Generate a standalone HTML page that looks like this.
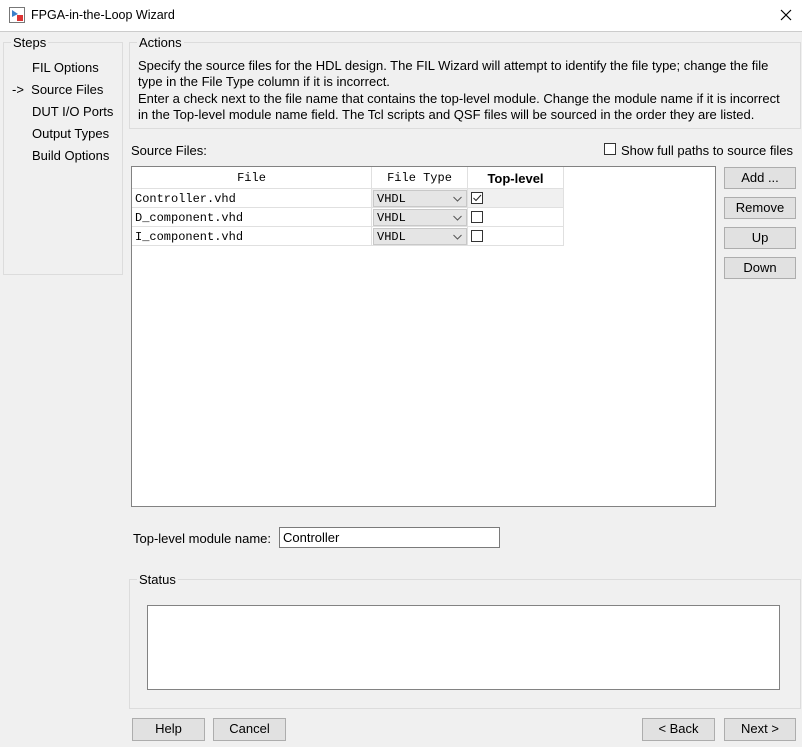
<html><head><style>
body{margin:0;width:802px;height:747px;background:#f0f0f0;font-family:"Liberation Sans",sans-serif;font-size:13px;color:#000;position:relative;overflow:hidden}
.a{position:absolute}
.grp{position:absolute;border:1px solid #dcdcdc}
.lg{position:absolute;background:#f0f0f0;padding:0 2px;top:-8px;font-size:13px}
.btn{position:absolute;background:#e1e1e1;border:1px solid #adadad;box-sizing:border-box;text-align:center;line-height:20px;font-size:13px}
.mono{font-family:"Liberation Mono",monospace;font-size:12px}
.cell{position:absolute;box-sizing:border-box;border-right:1px solid #e0e0e0;border-bottom:1px solid #e0e0e0;height:19px;line-height:20px}
.dd{position:absolute;background:#e5e5e5;border:1px solid #c8c8c8;box-sizing:border-box;height:17px;line-height:16px;padding-left:3px}
.dd svg{position:absolute;right:4px;top:5px}
.cb{position:absolute;width:12px;height:12px;border:1px solid #333;background:#fff;box-sizing:border-box}
</style></head><body>
<div class="a" style="left:0;top:0;width:802px;height:31px;background:#fff;border-bottom:1px solid #ccc"></div>
<svg class="a" style="left:9px;top:7px" width="16" height="16"><rect x="0.5" y="0.5" width="15" height="15" fill="#fff" stroke="#777"/><path d="M3 3 L9 7 L3 10Z" fill="#3a7fc8"/><rect x="8" y="8" width="6" height="6" fill="#d33"/></svg>
<div class="a" style="left:31px;top:8px;font-size:12.5px">FPGA-in-the-Loop Wizard</div>
<svg class="a" style="left:780px;top:9px" width="12" height="12"><path d="M1 1 L11 11 M11 1 L1 11" stroke="#000" stroke-width="1.2"/></svg>

<div class="grp" style="left:3px;top:42px;width:118px;height:231px"><span class="lg" style="left:7px">Steps</span></div>
<div class="a" style="left:32px;top:60px">FIL Options</div>
<div class="a" style="left:12px;top:82px">-&gt;&nbsp; Source Files</div>
<div class="a" style="left:32px;top:104px">DUT I/O Ports</div>
<div class="a" style="left:32px;top:126px">Output Types</div>
<div class="a" style="left:32px;top:148px">Build Options</div>

<div class="grp" style="left:129px;top:42px;width:670px;height:85px"><span class="lg" style="left:7px">Actions</span></div>
<div class="a" style="left:138px;top:58px;line-height:16.3px;width:660px;white-space:nowrap">Specify the source files for the HDL design. The FIL Wizard will attempt to identify the file type; change the file<br>type in the File Type column if it is incorrect.<br>Enter a check next to the file name that contains the top-level module. Change the module name if it is incorrect<br>in the Top-level module name field. The Tcl scripts and QSF files will be sourced in the order they are listed.</div>

<div class="a" style="left:131px;top:143px">Source Files:</div>
<div class="cb" style="left:604px;top:143px;border-color:#333"></div>
<div class="a" style="left:621px;top:143px">Show full paths to source files</div>

<div class="a" style="left:131px;top:166px;width:583px;height:339px;background:#fff;border:1px solid #828282"></div>
<div class="cell mono" style="left:132px;top:167px;width:240px;height:22px;line-height:23px;text-align:center">File</div>
<div class="cell mono" style="left:372px;top:167px;width:96px;height:22px;line-height:23px;text-align:center">File Type</div>
<div class="cell" style="left:468px;top:167px;width:96px;height:22px;line-height:23px;text-align:center;font-weight:bold">Top-level</div>

<div class="cell mono" style="left:132px;top:189px;width:240px;padding-left:3px">Controller.vhd</div>
<div class="cell" style="left:372px;top:189px;width:96px;background:#f0f0f0"></div>
<div class="cell" style="left:468px;top:189px;width:96px;background:#f0f0f0"></div>
<div class="cell mono" style="left:132px;top:208px;width:240px;padding-left:3px">D_component.vhd</div>
<div class="cell" style="left:372px;top:208px;width:96px"></div>
<div class="cell" style="left:468px;top:208px;width:96px"></div>
<div class="cell mono" style="left:132px;top:227px;width:240px;padding-left:3px">I_component.vhd</div>
<div class="cell" style="left:372px;top:227px;width:96px"></div>
<div class="cell" style="left:468px;top:227px;width:96px"></div>

<div class="dd mono" style="left:373px;top:190px;width:94px">VHDL<svg width="9" height="6"><path d="M0.5 1 L4.5 5 L8.5 1" stroke="#555" fill="none"/></svg></div>
<div class="dd mono" style="left:373px;top:209px;width:94px">VHDL<svg width="9" height="6"><path d="M0.5 1 L4.5 5 L8.5 1" stroke="#555" fill="none"/></svg></div>
<div class="dd mono" style="left:373px;top:228px;width:94px">VHDL<svg width="9" height="6"><path d="M0.5 1 L4.5 5 L8.5 1" stroke="#555" fill="none"/></svg></div>
<div class="cb" style="left:471px;top:192px"><svg width="10" height="10" style="position:absolute;left:0;top:0"><path d="M1.5 5 L4 7.5 L9 2" stroke="#222" fill="none" stroke-width="1"/></svg></div>
<div class="cb" style="left:471px;top:211px"></div>
<div class="cb" style="left:471px;top:230px"></div>

<div class="btn" style="left:724px;top:167px;width:72px;height:22px">Add ...</div>
<div class="btn" style="left:724px;top:197px;width:72px;height:22px">Remove</div>
<div class="btn" style="left:724px;top:227px;width:72px;height:22px">Up</div>
<div class="btn" style="left:724px;top:257px;width:72px;height:22px">Down</div>

<div class="a" style="left:133px;top:531px">Top-level module name:</div>
<div class="a" style="left:279px;top:527px;width:221px;height:21px;background:#fff;border:1px solid #7a7a7a;box-sizing:border-box;padding-left:3px;line-height:20px">Controller</div>

<div class="grp" style="left:129px;top:579px;width:670px;height:128px"><span class="lg" style="left:7px">Status</span></div>
<div class="a" style="left:147px;top:605px;width:633px;height:85px;background:#fff;border:1px solid #828282;box-sizing:border-box"></div>

<div class="btn" style="left:132px;top:718px;width:73px;height:23px">Help</div>
<div class="btn" style="left:213px;top:718px;width:73px;height:23px">Cancel</div>
<div class="btn" style="left:642px;top:718px;width:73px;height:23px">&lt; Back</div>
<div class="btn" style="left:724px;top:718px;width:72px;height:23px">Next &gt;</div>
</body></html>
